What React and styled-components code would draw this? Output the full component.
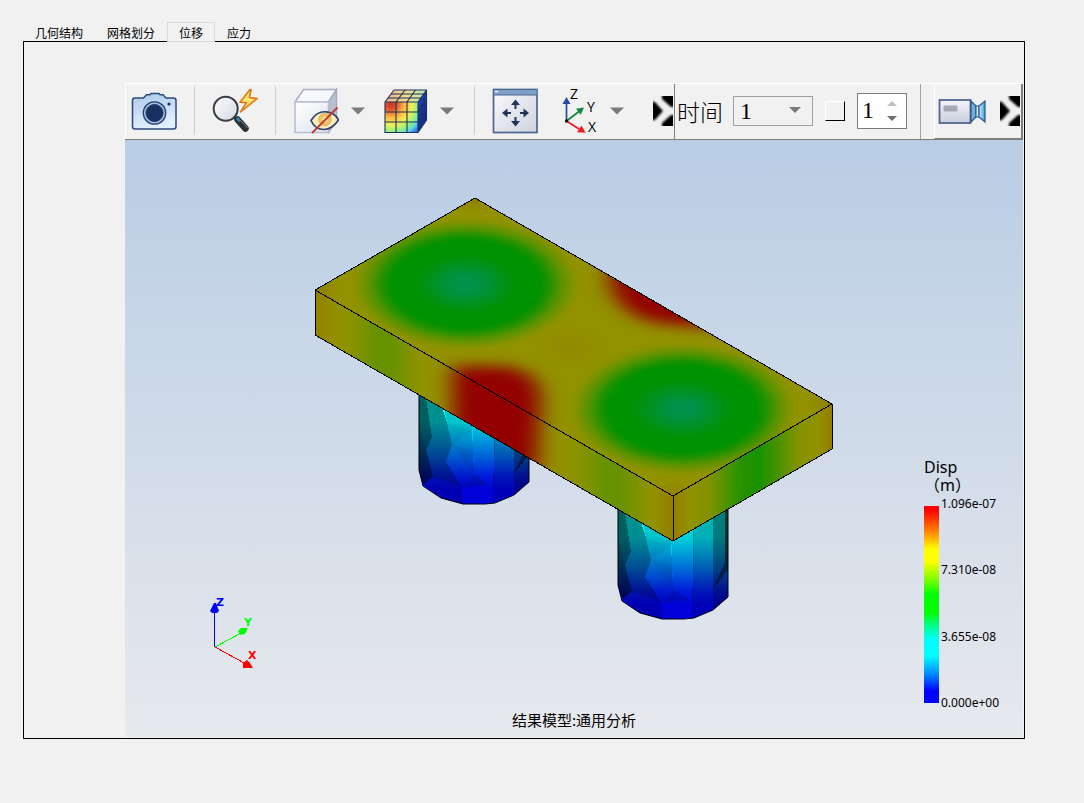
import { useState } from "react"
import styled, { createGlobalStyle } from "styled-components"

const TABS = ["几何结构", "网格划分", "位移", "应力"]
const TICKS = ["1.096e-07", "7.310e-08", "3.655e-08", "0.000e+00"]

export default function App() {
    const [tab, setTab] = useState(2);

    return <Page>
        <GlobalStyle />
        <TabList role="tablist">
            {TABS.map((name, i) => (
                <Tab key={name} role="tab" aria-selected={i === tab} $active={i === tab} onClick={() => setTab(i)}>{name}</Tab>
            ))}
        </TabList>
        <Panel role="tabpanel">
            <Toolbar />
            <Viewer>
                <Model />
                <Triad />
                <Legend>
                    <LegendTitle>Disp<br />（m）</LegendTitle>
                    <Scale>
                        <ColorBar />
                        <Ticks>
                            {TICKS.map((t) => <li key={t}>{t}</li>)}
                        </Ticks>
                    </Scale>
                </Legend>
                <Caption>结果模型:通用分析</Caption>
            </Viewer>
        </Panel>
    </Page>
}

function Toolbar() {
    const [frame, setFrame] = useState(1);

    return <Bar role="toolbar">
        <ViewTools>
            <Tool aria-label="Screenshot"><CameraIcon /></Tool>
            <Separator />
            <Tool aria-label="Quick zoom"><ZoomIcon /></Tool>
            <Separator />
            <Split>
                <Tool aria-label="Visibility"><HideIcon /></Tool>
                <MenuButton aria-label="Visibility options"><Caret /></MenuButton>
            </Split>
            <Split>
                <Tool aria-label="Contour"><ContourIcon /></Tool>
                <MenuButton aria-label="Contour options"><Caret /></MenuButton>
            </Split>
            <Separator />
            <Tool aria-label="Fit view"><FitIcon /></Tool>
            <Split>
                <Tool aria-label="Orientation"><AxesIcon /></Tool>
                <MenuButton aria-label="Orientation options"><Caret /></MenuButton>
            </Split>
            <MoreButton aria-label="More view tools"><MoreIcon /></MoreButton>
        </ViewTools>
        <TimeTools>
            <TimeLabel htmlFor="time">时间</TimeLabel>
            <SelectBox>
                <Select id="time" defaultValue="1">
                    <option>1</option>
                </Select>
                <Caret />
            </SelectBox>
            <RaisedButton aria-label="Apply" />
            <Spinner>
                <SpinInput aria-label="Frame" value={frame} onChange={(e) => setFrame(Number(e.target.value) || 1)} />
                <SpinButtons>
                    <SpinButton aria-label="Next frame" onClick={() => setFrame(frame + 1)}>
                        <svg width="10" height="5"><path d="M0 5L5 0L10 5Z" fill="#c0c0c0" /></svg>
                    </SpinButton>
                    <SpinButton aria-label="Previous frame" onClick={() => setFrame(Math.max(1, frame - 1))}>
                        <svg width="10" height="5"><path d="M0 0L5 5L10 0Z" fill="#707070" /></svg>
                    </SpinButton>
                </SpinButtons>
            </Spinner>
        </TimeTools>
        <RecordTools>
            <RecordButton aria-label="Record"><VideoIcon /></RecordButton>
            <MoreButton aria-label="More recording tools"><MoreIcon /></MoreButton>
        </RecordTools>
    </Bar>
}

/* ---------- icons ---------- */

const Caret = () => (
    <svg width="14" height="8" viewBox="0 0 14 8"><path d="M0 0.5H14L7 7.5Z" fill="#7b7b7b" /></svg>
)

const CameraIcon = () => (
    <svg width="46" height="46" viewBox="0 0 46 46">
        <defs>
            <linearGradient id="cam" x1="0" y1="0" x2="0.3" y2="1">
                <stop offset="0" stopColor="#a9c8ec" />
                <stop offset="1" stopColor="#e3f0fd" />
            </linearGradient>
        </defs>
        <path d="M3.5 10H12.5L15.5 6.8H19L20 5.6H28L29 6.8H32L35 10H42.5Q45 10 45 12.5V38.5Q45 41 42.5 41H4Q1.5 41 1.5 38.5V12.5Q1.5 10 3.5 10Z" fill="url(#cam)" stroke="#2f4a7a" strokeWidth="1.5" />
        <circle cx="23.5" cy="25" r="11.2" fill="#a9c2e2" stroke="#233f72" strokeWidth="1.3" />
        <circle cx="23.5" cy="25" r="8.6" fill="#18305f" stroke="#233f72" />
        <circle cx="38" cy="16" r="1.6" fill="#18305f" />
    </svg>
)

const ZoomIcon = () => (
    <svg width="46" height="46" viewBox="0 0 46 46">
        <defs>
            <linearGradient id="lens" x1="0" y1="0" x2="1" y2="1">
                <stop offset="0" stopColor="#fdfdfe" />
                <stop offset="1" stopColor="#d3d8e3" />
            </linearGradient>
        </defs>
        <path d="M22 28.5L27 33" stroke="#4c5357" strokeWidth="3" />
        <path d="M25.5 31.5L33.5 40.5" stroke="#2b3032" strokeWidth="6.5" strokeLinecap="round" />
        <path d="M25 30L28 33.5" stroke="#2f7fb2" strokeWidth="3" />
        <path d="M28.5 32.5L35.5 40" stroke="#8d9496" strokeWidth="0.9" />
        <circle cx="13.7" cy="20.7" r="12" fill="url(#lens)" stroke="#3b3d40" strokeWidth="2" />
        <path d="M38 1.5L28 14.2L34.3 14.8L28.5 24L45.3 10.5L37.5 9.5L39 2Z" fill="#fde36c" stroke="#dd7717" strokeWidth="1.6" strokeLinejoin="round" />
    </svg>
)

const HideIcon = () => (
    <svg width="46" height="46" viewBox="0 0 46 46">
        <defs>
            <linearGradient id="box" x1="0" y1="0" x2="1" y2="1">
                <stop offset="0" stopColor="#ffffff" />
                <stop offset="1" stopColor="#dfe2ee" />
            </linearGradient>
        </defs>
        <path d="M2 14L10.5 1.5H43.5L35.5 14Z" fill="#f6f7fb" stroke="#a9afc4" strokeWidth="1.4" />
        <path d="M35.5 14L43.5 1.5V33L35.5 44.5Z" fill="#b9bfce" stroke="#a4abc0" strokeWidth="1.4" />
        <path d="M2 14H35.5V44.5H2Z" fill="url(#box)" stroke="#b9bfd2" strokeWidth="1.6" />
        <path d="M18 32.5Q24 23 33 23.8Q42 24.5 45.5 32Q39 41.5 31 41.5Q22 41.5 18 32.5Z" fill="#faecbd" stroke="#2c4570" strokeWidth="1.7" />
        <circle cx="32" cy="31.5" r="6.2" fill="#eac465" stroke="#d9b25a" />
        <circle cx="32" cy="31.5" r="2.5" fill="#fbe7a8" />
        <path d="M19 45L44.5 19.5" stroke="#c0392b" strokeWidth="1.8" />
    </svg>
)

const ContourIcon = () => (
    <svg width="46" height="46" viewBox="0 0 46 46">
        <defs>
            <radialGradient id="heat" gradientUnits="userSpaceOnUse" cx="9" cy="16" r="41">
                <stop offset="0" stopColor="#cc3326" />
                <stop offset="0.15" stopColor="#e25730" />
                <stop offset="0.32" stopColor="#fbb440" />
                <stop offset="0.5" stopColor="#f4ee58" />
                <stop offset="0.64" stopColor="#a0f478" />
                <stop offset="0.78" stopColor="#59dcd8" />
                <stop offset="0.88" stopColor="#3f7cf5" />
                <stop offset="1" stopColor="#2b4ee8" />
            </radialGradient>
            <linearGradient id="heatTop" x1="0" x2="1">
                <stop offset="0" stopColor="#ecae8c" />
                <stop offset="0.5" stopColor="#f1dd92" />
                <stop offset="1" stopColor="#b5ecb4" />
            </linearGradient>
            <linearGradient id="heatSide" x1="0" y1="0" x2="0.4" y2="1">
                <stop offset="0" stopColor="#2c7fbf" />
                <stop offset="0.4" stopColor="#143fc4" />
                <stop offset="1" stopColor="#10269a" />
            </linearGradient>
        </defs>
        <path d="M3 14L12 2H44.5L36 14Z" fill="url(#heatTop)" />
        <path d="M36 14L44.5 2V32L36 44.5Z" fill="url(#heatSide)" />
        <path d="M3 14H36V44.5H3Z" fill="url(#heat)" />
        <g fill="none" stroke="#1f3157" strokeWidth="1.1">
            <path d="M3 14L12 2H44.5V32L36 44.5H3ZM3 14H36V44.5M36 14L44.5 2" />
            <path d="M14 44.5V14L23 2M25 44.5V14L33.5 2" />
            <path d="M6 10H39V40M9 6H42V36" />
            <path d="M3 24H36L44.5 12M3 34H36L44.5 22" />
        </g>
    </svg>
)

const FitIcon = () => (
    <svg width="46" height="46" viewBox="0 0 46 46">
        <defs>
            <linearGradient id="fit" x1="0" y1="0" x2="1" y2="1">
                <stop offset="0" stopColor="#fafafd" />
                <stop offset="1" stopColor="#cfd2de" />
            </linearGradient>
        </defs>
        <rect x="1.5" y="1.5" width="43.5" height="43" fill="url(#fit)" stroke="#4a6690" strokeWidth="1.7" />
        <rect x="2" y="2" width="42.5" height="5" fill="#809fc8" />
        <path d="M2 7H45" stroke="#4a6690" />
        <path d="M3 3.5H6" stroke="#fff" strokeWidth="1.5" />
        <g stroke="#1f355c" strokeWidth="2">
            <path d="M23.5 16V21M23.5 29V34M14 25H19M28 25H33" />
        </g>
        <path d="M23.5 11.5L28 17H19ZM23.5 38.5L19 33H28ZM10 25L15.5 20.5V29.5ZM37 25L31.5 29.5V20.5Z" fill="#1f355c" />
    </svg>
)

const AxesIcon = () => (
    <svg width="46" height="54" viewBox="-1 -4 46 54">
        <path d="M13.5 33V14" stroke="#2549a0" strokeWidth="1.7" />
        <path d="M13.5 9L17.5 16H9.5Z" fill="#2549a0" />
        <path d="M13.5 33L26 23.5" stroke="#118a3c" strokeWidth="1.7" />
        <path d="M31 19.5L27.8 26.8L23 20.8Z" fill="#118a3c" />
        <path d="M13.5 33L26 41" stroke="#ec1c1c" strokeWidth="1.7" />
        <path d="M32.5 44.7L24 44.3L28.5 37.5Z" fill="#ec1c1c" />
        <circle cx="13.5" cy="33" r="1.7" fill="#111" />
        <AxisText x="17" y="11">Z</AxisText>
        <AxisText x="34" y="24">Y</AxisText>
        <AxisText x="35" y="44">X</AxisText>
    </svg>
)

const MoreIcon = () => (
    <svg width="20" height="30" viewBox="0 0 20 30">
        <defs>
            <filter id="soft" x="-50%" y="-50%" width="200%" height="200%"><feGaussianBlur stdDeviation="1.3" /></filter>
            <clipPath id="moreBox"><rect width="20" height="30" /></clipPath>
        </defs>
        <rect width="20" height="30" fill="#f1f1f1" />
        <g clipPath="url(#moreBox)" filter="url(#soft)">
            <path d="M-4 5L2 6L10 15L2 24L-4 25Z" fill="#000" />
            <path d="M9 -4H24V11H18L9 3ZM9 34H24V19H18L9 27Z" fill="#000" />
        </g>
    </svg>
)

const VideoIcon = () => (
    <svg width="48" height="28" viewBox="0 0 48 28">
        <defs>
            <linearGradient id="video" x1="0" y1="0" x2="0" y2="1">
                <stop offset="0" stopColor="#f5f6fa" />
                <stop offset="1" stopColor="#c9cedd" />
            </linearGradient>
            <linearGradient id="horn" x1="0" x2="1">
                <stop offset="0" stopColor="#d7f0fb" />
                <stop offset="1" stopColor="#2a9fdc" />
            </linearGradient>
        </defs>
        <rect x="1.5" y="3" width="31" height="23" fill="url(#video)" stroke="#53658f" strokeWidth="1.8" />
        <rect x="5.5" y="8.5" width="14" height="6" rx="1" fill="#a5a9b1" />
        <path d="M33 4L38 9V20L33 25Z" fill="#6db3dc" stroke="#2d5688" strokeWidth="1.2" />
        <path d="M38 9H41V20H38Z" fill="#cfe9f8" stroke="#2d5688" />
        <path d="M41 9L47 4V25L41 20Z" fill="url(#horn)" stroke="#2d5688" strokeWidth="1.2" />
    </svg>
)

/* ---------- 3D scene ---------- */

// facets of a leg: [points, shade]
const FACETS = [
    ["419,385 424,385 432,437 426,450 419,423", 0.62],
    ["424,385 440,400 447,423 452,445 446,462 432,437", 0.42],
    ["419,423 426,450 433,477 423,484 419,470", 0.66],
    ["426,450 432,437 446,462 462,487 433,477", 0.42],
    ["433,477 462,487 463,504 441,498 423,484", 0.3],
    ["440,385 471,385 472,430 474,474 462,487 446,462 452,445 447,423", 0.2],
    ["471,385 495,385 495,440 493,503 463,504 462,487 474,474", 0.15],
    ["474,474 492,486 462,487", 0.14],
    ["495,385 514,385 514,495 493,503", 0.28],
    ["514,385 526,385 526,447 515,472 514,472", 0.5],
    ["526,385 529,385 529,455 526,447", 0.78],
    ["526,447 529,455 515,472", 0.7],
    ["514,472 529,455 529,482 514,495", 0.45],
    ["447,423 472,430 452,445", 0.05],
    ["452,445 472,450 474,474", 0.05],
]

const Leg = ({ transform }) => (
    <g transform={transform}>
        <path d="M419 385V470L423 486L441 498L463 504H485L495 503L514 495L529 482V385Z" fill="url(#leg)" />
        <g shapeRendering="crispEdges">
            {FACETS.map(([points, shade]) => <polygon key={points} points={points} fill="#000" fillOpacity={shade} />)}
        </g>
        <path d="M419 385V470L423 486L441 498L463 504H485L495 503L514 495L529 482V385" fill="none" stroke="#000" />
    </g>
)

const Model = () => (
    <SceneSvg viewBox="125 140 898 597" role="img" aria-label="Displacement contour">
        <defs>
            <linearGradient id="leg" gradientUnits="userSpaceOnUse" x1="0" y1="390" x2="0" y2="490">
                <stop offset="0" stopColor="#00ffee" />
                <stop offset="0.32" stopColor="#00f6ff" />
                <stop offset="0.5" stopColor="#00b4ff" />
                <stop offset="0.68" stopColor="#006cff" />
                <stop offset="0.86" stopColor="#0020ff" />
                <stop offset="1" stopColor="#0000ff" />
            </linearGradient>
            <radialGradient id="spot">
                <stop offset="0" stopColor="#009250" />
                <stop offset="0.12" stopColor="#009244" />
                <stop offset="0.4" stopColor="#009208" />
                <stop offset="0.46" stopColor="#009200" />
                <stop offset="0.62" stopColor="#009200" />
                <stop offset="0.7" stopColor="#1c9200" />
                <stop offset="0.8" stopColor="#569200" />
                <stop offset="0.9" stopColor="#809200" />
                <stop offset="1" stopColor="#929200" stopOpacity="0" />
            </radialGradient>
            <radialGradient id="warm">
                <stop offset="0" stopColor="#927c00" />
                <stop offset="1" stopColor="#928a00" stopOpacity="0" />
            </radialGradient>
            <linearGradient id="front" gradientUnits="userSpaceOnUse" x1="315" y1="0" x2="673" y2="0">
                <stop offset="0" stopColor="#928000" />
                <stop offset="0.06" stopColor="#929200" />
                <stop offset="0.1" stopColor="#8c9200" />
                <stop offset="0.17" stopColor="#669200" />
                <stop offset="0.21" stopColor="#669200" />
                <stop offset="0.3" stopColor="#929200" />
                <stop offset="0.7" stopColor="#929200" />
                <stop offset="0.76" stopColor="#809200" />
                <stop offset="0.81" stopColor="#669200" />
                <stop offset="0.85" stopColor="#689200" />
                <stop offset="0.94" stopColor="#929200" />
                <stop offset="1" stopColor="#927e00" />
            </linearGradient>
            <linearGradient id="side" gradientUnits="userSpaceOnUse" x1="673" y1="0" x2="832" y2="0">
                <stop offset="0" stopColor="#927c00" />
                <stop offset="0.1" stopColor="#929200" />
                <stop offset="0.22" stopColor="#849200" />
                <stop offset="0.42" stopColor="#289200" />
                <stop offset="0.54" stopColor="#189200" />
                <stop offset="0.65" stopColor="#449200" />
                <stop offset="0.8" stopColor="#889200" />
                <stop offset="0.9" stopColor="#929200" />
                <stop offset="1" stopColor="#927c00" />
            </linearGradient>
            <clipPath id="topFace"><path d="M475 198L832 404L673 496L315 290Z" /></clipPath>
            <clipPath id="plate"><path d="M475 198L832 404V449L673 541L315 335V290Z" /></clipPath>
            <filter id="blend" colorInterpolationFilters="sRGB" x="-50%" y="-50%" width="200%" height="200%">
                <feGaussianBlur stdDeviation="11 7" />
            </filter>
        </defs>

        <Leg />
        <Leg transform="translate(199 115)" />

        <path d="M315 290L673 496V541L315 335Z" fill="url(#front)" />
        <path d="M673 496L832 404V449L673 541Z" fill="url(#side)" />
        <g clipPath="url(#topFace)">
            <path d="M475 198L832 404L673 496L315 290Z" fill="#929200" />
            <ellipse cx="570" cy="347" rx="50" ry="30" fill="url(#warm)" fillOpacity="0.4" />
            <ellipse cx="475" cy="198" rx="30" ry="18" fill="url(#warm)" />
            <ellipse cx="315" cy="290" rx="30" ry="30" fill="url(#warm)" />
            <ellipse cx="832" cy="404" rx="30" ry="30" fill="url(#warm)" />
            <ellipse cx="673" cy="496" rx="30" ry="18" fill="url(#warm)" />
            <ellipse cx="466" cy="284" rx="118" ry="69" fill="url(#spot)" />
            <ellipse cx="683" cy="409" rx="118" ry="69" fill="url(#spot)" />
            <path d="M610 200V285Q620 318 665 324L770 332V200Z" fill="#920000" filter="url(#blend)" />
        </g>
        <g clipPath="url(#plate)">
            <path d="M452 366H500Q536 368 541 395L534 520H454Z" fill="#920000" filter="url(#blend)" />
        </g>
        <g fill="none" stroke="#000" shapeRendering="crispEdges">
            <path d="M475 198L832 404V449L673 541L315 335V290Z" />
            <path d="M315 290L673 496L832 404M673 496V541" />
        </g>
    </SceneSvg>
)

const Triad = () => (
    <TriadSvg width="60" height="80" viewBox="205 592 60 80">
        <g shapeRendering="crispEdges">
            <path d="M214.5 647V610" stroke="#00f" />
            <path d="M215 647L241 633" stroke="#0f0" />
            <path d="M215 647L246 664" stroke="#f00" />
        </g>
        <path d="M214 603H216L219 611L217 613H212L210 611Z" fill="#00f" />
        <path d="M248 628L245 634L240 635L238 631L241 628Z" fill="#0f0" />
        <path d="M253 668L243 668L243 663L247 660L250 663Z" fill="#f00" />
        <TriadText x="216" y="606" fill="#00f">Z</TriadText>
        <TriadText x="244" y="626" fill="#0f0">Y</TriadText>
        <TriadText x="248" y="659" fill="#f00">X</TriadText>
    </TriadSvg>
)

/* ---------- styles ---------- */

const GlobalStyle = createGlobalStyle`
    * {
        box-sizing: border-box;
    }
    body {
        margin: 0;
        background: #f1f1f1;
        color: #000;
        font-family: "Noto Sans", "Noto Sans CJK SC", sans-serif;
        font-size: 12px;
    }
    button, input, select {
        font: inherit;
        color: inherit;
        margin: 0;
        padding: 0;
        border: 0;
        border-radius: 0;
        background: none;
    }
    svg {
        display: block;
        flex: none;
    }
`

const Page = styled.main`
    padding: 22px 59px 64px 23px;
`

const TabList = styled.div`
    display: flex;
    position: relative;
    z-index: 1;
`

const Tab = styled.button`
    height: 20px;
    padding: 1px 11px 0;
    border: 1px solid ${(p) => p.$active ? "#d9d9d9" : "transparent"};
    background: ${(p) => p.$active ? "#f1f1f1" : "transparent"};
    font-family: "Noto Sans CJK SC", sans-serif;
    line-height: 18px;
`

const Panel = styled.section`
    margin-top: -1px;
    padding: 41px 1px 1px 101px;
    border: 1px solid #000;
`

const Bar = styled.div`
    display: flex;
    height: 57px;
    border-top: 1px solid #fff;
    border-bottom: 1px solid #7d7d7d;
`

const ViewTools = styled.div`
    display: flex;
    align-items: center;
    flex: 0 0 550px;
    padding-bottom: 2px;
    border-left: 1px solid #fff;
    border-right: 1px solid #7d7d7d;
`

const Tool = styled.button`
    display: flex;
    justify-content: center;
    align-items: center;
    width: 56px;
    height: 54px;
    margin-right: 4px;
`

const Split = styled.div`
    display: flex;
    margin-right: 5px;
    ${Tool} {
        margin-right: 0;
    }
`

const MenuButton = styled.button`
    display: flex;
    justify-content: center;
    align-items: center;
    width: 28px;
`

const Separator = styled.span`
    width: 1px;
    height: 49px;
    margin: 0 12px 0 8px;
    background: #cfcfcf;
`

const MoreButton = styled.button`
    margin: 0 1px 0 auto;
`

const TimeTools = styled.div`
    display: flex;
    align-items: center;
    flex: 1;
    padding: 0 0 2px 2px;
    border-right: 1px solid #a0a0a0;
`

const TimeLabel = styled.label`
    width: 46px;
    margin-right: 10px;
    font-family: "Noto Sans CJK SC", sans-serif;
    font-size: 23px;
    font-weight: 300;
    line-height: 30px;
    white-space: nowrap;
`

const SelectBox = styled.div`
    position: relative;
    width: 80px;
    margin-right: 12px;
    svg {
        position: absolute;
        right: 12px;
        top: 10px;
        width: 12px;
        pointer-events: none;
    }
`

const Select = styled.select`
    display: block;
    width: 100%;
    height: 30px;
    padding: 0 6px;
    border: 1px solid #a0a0a0;
    appearance: none;
    font-family: "Liberation Serif", serif;
    font-size: 24px;
    line-height: 28px;
`

const RaisedButton = styled.button`
    width: 20px;
    height: 20px;
    margin-right: 12px;
    border: 1px solid;
    border-color: #fff #000 #000 #fff;
`

const Spinner = styled.div`
    display: flex;
    width: 50px;
    height: 36px;
    border: 1px solid #7a7a7a;
    background: #fff;
`

const SpinInput = styled.input`
    width: 29px;
    padding-left: 4px;
    outline: none;
    font-family: "Liberation Serif", serif;
    font-size: 24px;
`

const SpinButtons = styled.div`
    display: flex;
    flex-direction: column;
    justify-content: center;
    gap: 10px;
`

const SpinButton = styled.button`
    display: block;
`

const RecordTools = styled.div`
    display: flex;
    align-items: center;
    flex: 0 0 89px;
    margin-left: 13px;
    border-left: 1px solid #fff;
    border-right: 2px solid #7d7d7d;
    border-bottom: 1px solid #7d7d7d;
`

const RecordButton = styled.button`
    margin-left: 3px;
`

const Viewer = styled.div`
    position: relative;
    background: linear-gradient(#b9cde5, #e7e9ed);
`

const SceneSvg = styled.svg`
    width: 100%;
    height: auto;
`

const TriadSvg = styled.svg`
    position: absolute;
    left: 80px;
    bottom: 65px;
`

const TriadText = styled.text`
    font-family: "DejaVu Sans", sans-serif;
    font-size: 11px;
    font-weight: bold;
`

const AxisText = styled.text`
    font-family: "Open Sans", sans-serif;
    font-size: 14px;
`

const Legend = styled.div`
    position: absolute;
    right: 20px;
    bottom: 27px;
    width: 79px;
`

const LegendTitle = styled.div`
    font-size: 16px;
    line-height: 18px;
    white-space: nowrap;
`

const Scale = styled.div`
    display: flex;
    gap: 2px;
    margin-top: 3px;
`

const ColorBar = styled.div`
    width: 15px;
    height: 197px;
    margin: 9px 0 7px;
    background: linear-gradient(#f00 2%, #ff7800 12%, #ff0 22%, #ff0 28%, #90ff00 36%, #0f0 45%, #0f0 54%, #00ff80 60%, #0ff 68%, #0ff 76%, #0080ff 86%, #00f 94%);
`

const Ticks = styled.ul`
    display: flex;
    flex-direction: column;
    justify-content: space-between;
    margin: 0;
    padding: 0;
    list-style: none;
    line-height: 14px;
`

const Caption = styled.div`
    position: absolute;
    left: 0;
    right: 0;
    bottom: 7px;
    font-family: "Noto Sans CJK SC", sans-serif;
    font-size: 15px;
    line-height: 20px;
    text-align: center;
`
